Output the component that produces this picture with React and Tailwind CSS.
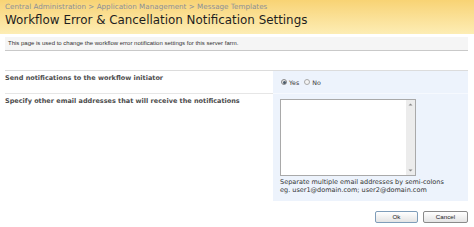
export default function App() {
  const verdana = { fontFamily: '"DejaVu Sans", Verdana, sans-serif' };
  const arial = { fontFamily: '"Liberation Sans", Arial, sans-serif' };
  return (
    <div className="relative w-[474px] h-[227px] overflow-hidden bg-white" style={verdana}>
      <div className="h-[34px] bg-gradient-to-b from-[#f8d374] to-[#fdedb4] pl-[5px] pt-[2px]">
        <div className="text-[7.2px] leading-[10px] text-[#8c8f96]">
          Central Administration &gt; Application Management &gt; Message Templates
        </div>
        <div className="text-[11.9px] leading-[16px] text-[#1e1e1e]">
          Workflow Error &amp; Cancellation Notification Settings
        </div>
      </div>
      <div className="ml-[5px] mt-[3px] w-[463px] h-[14px] bg-[#f5f5f5] border-b border-[#c9c9c9] flex items-center pl-[3px]">
        <span className="text-[6px] text-[#333]" style={arial}>
          This page is used to change the workflow error notification settings for this server farm.
        </span>
      </div>
      <div className="ml-[5px] mt-[19px] w-[463px] border-t border-[#dcdcdc] grid grid-cols-[268px_195px]">
        <div className="h-[23px] border-b border-[#e6e6e6] pt-[3px]">
          <div className="text-[6.5px] leading-[8px] font-bold text-[#4d4d4d]">Send notifications to the workflow initiator</div>
        </div>
        <div className="h-[23px] bg-[#edf3fc] border-b border-[#f6f9fe] flex items-end pb-[6px] pl-[8px]">
          <div className="flex items-center gap-[2px]">
            <span className="w-[6px] h-[6px] rounded-full border border-[#8a8a8a] bg-[#e8e8e8] flex items-center justify-center">
              <span className="w-[3px] h-[3px] rounded-full bg-[#4a5a6a]" />
            </span>
            <span className="text-[6.3px] text-[#3a3a3a]">Yes</span>
          </div>
          <div className="flex items-center gap-[2px] ml-[5px]">
            <span className="w-[6px] h-[6px] rounded-full border border-[#a8a8a8] bg-[#f4f4f4]" />
            <span className="text-[6.3px] text-[#3a3a3a]">No</span>
          </div>
        </div>
        <div className="h-[107px] pt-[3px]">
          <div className="text-[6.5px] leading-[8px] font-bold text-[#4d4d4d]">Specify other email addresses that will receive the notifications</div>
        </div>
        <div className="h-[107px] bg-[#edf3fc] pl-[7px] pt-[5px]">
          <div className="w-[136px] h-[77px] border border-[#a9a9a9] bg-white flex justify-end">
            <div className="w-[9px] h-full bg-[#ececec] flex flex-col items-center justify-between py-[3px]">
              <svg width="5" height="3" viewBox="0 0 5 3"><path d="M0.5 2.5 L2.5 0.5 L4.5 2.5 Z" fill="#8a8a8a" /></svg>
              <svg width="5" height="3" viewBox="0 0 5 3"><path d="M0.5 0.5 L2.5 2.5 L4.5 0.5 Z" fill="#8a8a8a" /></svg>
            </div>
          </div>
          <div className="mt-[3px] text-[6.5px] leading-[7.5px] text-[#333]">
            <div>Separate multiple email addresses by semi-colons</div>
            <div>eg. user1@domain.com; user2@domain.com</div>
          </div>
        </div>
      </div>
      <div className="ml-[5px] w-[463px] flex justify-end gap-[5px] mt-[10px]">
        <button className="w-[43px] h-[12px] border border-[#7f9db9] rounded-[2px] bg-gradient-to-b from-[#ffffff] to-[#e4e4e4] text-[6.2px] text-[#222]" style={arial}>Ok</button>
        <button className="w-[45px] h-[12px] border border-[#8a8a8a] rounded-[2px] bg-gradient-to-b from-[#ffffff] to-[#e4e4e4] text-[6.2px] text-[#222]" style={arial}>Cancel</button>
      </div>
    </div>
  );
}
